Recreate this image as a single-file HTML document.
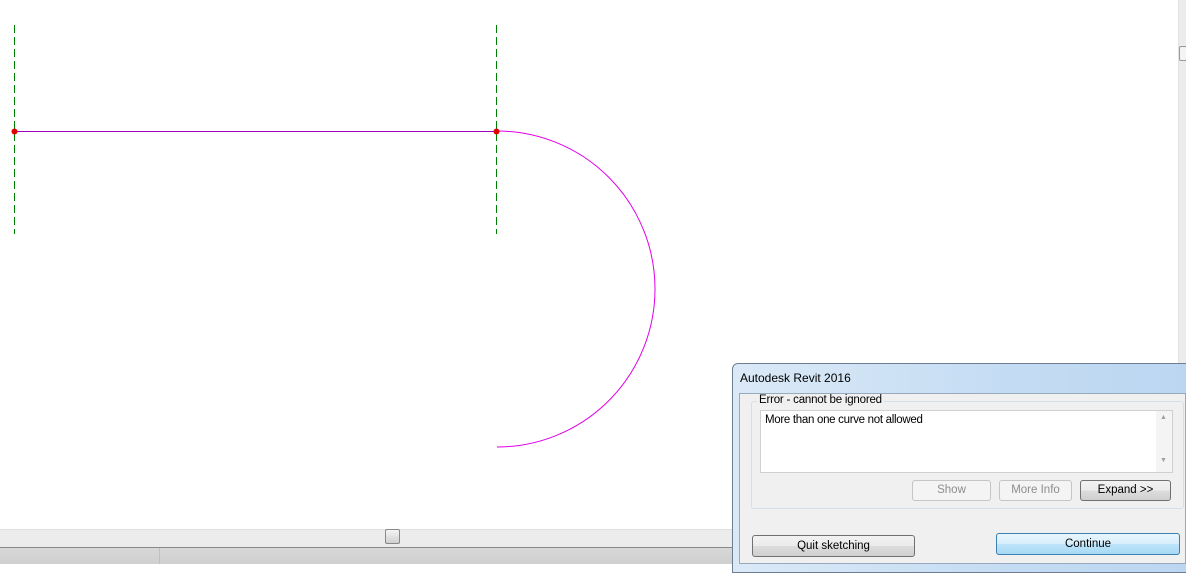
<!DOCTYPE html>
<html><head><style>
body{margin:0;width:1186px;height:564px;overflow:hidden;background:#fff;position:relative;font-family:"Liberation Sans",sans-serif;font-size:12px;}
.abs{position:absolute;box-sizing:border-box}
.btn{position:absolute;box-sizing:border-box;border:1px solid #707070;border-radius:3px;background:linear-gradient(#f2f2f2 0%,#ebebeb 50%,#dddddd 51%,#cfcfcf 100%);text-align:center;color:#000;font-size:11.5px}
.dis{border-color:#c5c5c5;background:#f4f4f4;color:#8d8d8d}
</style></head><body>
<svg class="abs" style="left:0;top:0" width="1186" height="564">
<line x1="14.5" y1="25" x2="14.5" y2="234" stroke="#008000" stroke-width="1" stroke-dasharray="8 4"/>
<line x1="496.5" y1="25" x2="496.5" y2="234" stroke="#008000" stroke-width="1" stroke-dasharray="8 4"/>
<line x1="14" y1="131.5" x2="496" y2="131.5" stroke="#a000c0" stroke-width="1"/>
<path d="M497 131 A158 158 0 0 1 497 447" fill="none" stroke="#e000e8" stroke-width="1"/>
<circle cx="14.5" cy="131.5" r="3" fill="#e00000"/>
<circle cx="496.5" cy="131.5" r="3" fill="#e00000"/>
</svg>
<div class="abs" style="left:1178px;top:0;width:8px;height:364px;background:#ececec;border-left:1px solid #e2e2e2"></div>
<div class="abs" style="left:1179px;top:46px;width:8px;height:15px;background:#f4f4f4;border:1px solid #999;border-radius:2px"></div>
<div class="abs" style="left:0;top:529px;width:740px;height:18px;background:#ececec;border-top:1px solid #e0e0e0"></div>
<div class="abs" style="left:385px;top:529px;width:15px;height:15px;background:linear-gradient(#f4f4f4,#d0d0d0);border:1px solid #888;border-radius:2px"></div>
<div class="abs" style="left:0;top:547px;width:740px;height:17px;background:linear-gradient(#d8d8d8,#cfcfcf);border-top:1px solid #888"></div>
<div class="abs" style="left:159px;top:548px;width:1px;height:16px;background:#c0c0c0"></div>
<div class="abs" style="left:732px;top:363px;width:460px;height:210px;background:linear-gradient(90deg,#dbe9f7,#c4dcf3 60%,#bcd6f1);border:1px solid #6e7f94;border-radius:6px 0 0 0"></div>
<div class="abs" style="left:740px;top:371px;font-size:12px;color:#000">Autodesk Revit 2016</div>
<div class="abs" style="left:739px;top:393px;width:447px;height:171px;background:#f0f0f0;border:1px solid #97a9bd"></div>
<div class="abs" style="left:751px;top:401px;width:433px;height:108px;border:1px solid #d5dfe5;border-radius:3px"></div>
<div class="abs" style="left:757px;top:394px;background:#f0f0f0;padding:0 2px;font-size:11.5px;letter-spacing:-0.2px">Error - cannot be ignored</div>
<div class="abs" style="left:760px;top:410px;width:413px;height:63px;background:#fff;border:1px solid #d0d0d0"></div>
<div class="abs" style="left:1156px;top:411px;width:16px;height:61px;background:#f4f4f4"></div>
<div class="abs" style="left:1160px;top:414px;font-size:7px;color:#a0a0a0">▲</div>
<div class="abs" style="left:1160px;top:457px;font-size:7px;color:#a0a0a0">▼</div>
<div class="abs" style="left:765px;top:414px;font-size:11.5px;letter-spacing:-0.3px">More than one curve not allowed</div>
<div class="btn dis" style="left:912px;top:480px;width:79px;height:21px;line-height:19px">Show</div>
<div class="btn dis" style="left:999px;top:480px;width:73px;height:21px;line-height:19px">More Info</div>
<div class="btn" style="left:1080px;top:480px;width:91px;height:21px;line-height:19px">Expand &gt;&gt;</div>
<div class="btn" style="left:752px;top:535px;width:163px;height:22px;line-height:21px">Quit sketching</div>
<div class="btn" style="left:996px;top:533px;width:184px;height:22px;line-height:20px;border-color:#3c7fb1;background:linear-gradient(#e9f6fd 0%,#d6eefc 50%,#bde4fa 51%,#a7d9f5 100%)">Continue</div>
</body></html>
